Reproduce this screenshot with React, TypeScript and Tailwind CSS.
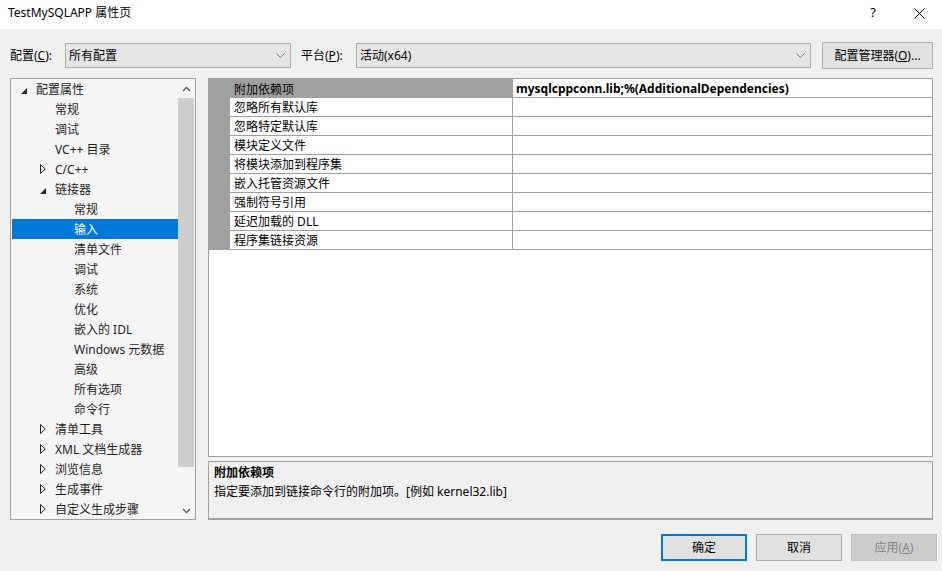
import React from 'react';

type TreeItem = {
  label: string;
  level: number;
  arrow?: 'open' | 'closed';
  selected?: boolean;
};

const treeItems: TreeItem[] = [
  { label: '配置属性', level: 0, arrow: 'open' },
  { label: '常规', level: 1 },
  { label: '调试', level: 1 },
  { label: 'VC++ 目录', level: 1 },
  { label: 'C/C++', level: 1, arrow: 'closed' },
  { label: '链接器', level: 1, arrow: 'open' },
  { label: '常规', level: 2 },
  { label: '输入', level: 2, selected: true },
  { label: '清单文件', level: 2 },
  { label: '调试', level: 2 },
  { label: '系统', level: 2 },
  { label: '优化', level: 2 },
  { label: '嵌入的 IDL', level: 2 },
  { label: 'Windows 元数据', level: 2 },
  { label: '高级', level: 2 },
  { label: '所有选项', level: 2 },
  { label: '命令行', level: 2 },
  { label: '清单工具', level: 1, arrow: 'closed' },
  { label: 'XML 文档生成器', level: 1, arrow: 'closed' },
  { label: '浏览信息', level: 1, arrow: 'closed' },
  { label: '生成事件', level: 1, arrow: 'closed' },
  { label: '自定义生成步骤', level: 1, arrow: 'closed' },
];

const properties = [
  '附加依赖项',
  '忽略所有默认库',
  '忽略特定默认库',
  '模块定义文件',
  '将模块添加到程序集',
  '嵌入托管资源文件',
  '强制符号引用',
  '延迟加载的 DLL',
  '程序集链接资源',
];

const indent = ['pl-0', 'pl-[19px]', 'pl-[38px]'];

const Chevron = () => (
  <svg width="9" height="5" viewBox="0 0 9 5" className="shrink-0">
    <path d="M0.5 0.5 L4.5 4.5 L8.5 0.5" fill="none" stroke="#707070" strokeWidth="1" />
  </svg>
);

const TreeArrow = ({ kind }: { kind?: 'open' | 'closed' }) => {
  if (kind === 'open') {
    return (
      <svg width="6" height="6" viewBox="0 0 6 6" className="mt-[3px]">
        <polygon points="6,0 6,6 0,6" fill="#262626" />
      </svg>
    );
  }
  if (kind === 'closed') {
    return (
      <svg width="6" height="10" viewBox="0 0 6 10">
        <polygon points="0.5,0.5 5.3,5 0.5,9.5" fill="none" stroke="#262626" strokeWidth="1" />
      </svg>
    );
  }
  return null;
};

const Combo = ({ value, className }: { value: string; className: string }) => (
  <div className={`h-[25px] flex items-center justify-between pl-[3px] pr-[5px] bg-[#e5e5e5] border border-[#adadad] ${className}`}>
    <span>{value}</span>
    <Chevron />
  </div>
);

export default function App() {
  return (
    <div className="w-[942px] h-[571px] bg-[#f0f0f0] text-[12px] text-black flex flex-col font-['Noto_Sans','Noto_Sans_CJK_SC',sans-serif] overflow-hidden">
      {/* Title bar */}
      <div className="h-[29px] bg-white flex items-center justify-between pl-[8px] shrink-0">
        <span className="-mt-[3px]">TestMySQLAPP 属性页</span>
        <div className="flex items-center -mt-[3px]">
          <span className="w-[46px] text-center text-[13px]">?</span>
          <span className="w-[46px] flex justify-center">
            <svg width="11" height="11" viewBox="0 0 11 11">
              <path d="M0.5 0.5 L10.5 10.5 M10.5 0.5 L0.5 10.5" stroke="#000" strokeWidth="1" />
            </svg>
          </span>
        </div>
      </div>

      {/* Configuration row */}
      <div className="flex items-center mt-[14px] pl-[10px] h-[25px] shrink-0">
        <span className="w-[55px]">
          配置(<span className="underline">C</span>):
        </span>
        <Combo value="所有配置" className="w-[226px]" />
        <span className="ml-[10px] w-[55px]">
          平台(<span className="underline">P</span>):
        </span>
        <Combo value="活动(x64)" className="w-[455px]" />
        <button className="ml-[11px] w-[111px] h-[27px] bg-[#e1e1e1] border border-[#adadad]">
          配置管理器(<span className="underline">O</span>)...
        </button>
      </div>

      {/* Main area */}
      <div className="flex mt-[10px] pl-[10px] gap-[12px] h-[442px] shrink-0">
        {/* Tree */}
        <div className="w-[186px] border border-[#a0a0a0] bg-[#f5f5f5] flex">
          <div className="flex-1 pl-[1px] text-[#1e1e1e]">
            {treeItems.map((item, i) => (
              <div
                key={i}
                className={`h-[20px] flex items-center ${indent[item.level]} ${
                  item.selected ? 'bg-[#0078d7] text-white' : ''
                }`}
              >
                <span className="w-[24px] flex justify-center shrink-0">
                  <TreeArrow kind={item.arrow} />
                </span>
                <span className="whitespace-nowrap pt-[1px]">{item.label}</span>
              </div>
            ))}
          </div>
          {/* Scrollbar */}
          <div className="w-[17px] flex flex-col pr-[1px]">
            <div className="h-[19px] flex items-center justify-center">
              <svg width="9" height="6" viewBox="0 0 9 6">
                <path d="M1 5 L4.5 1.5 L8 5" fill="none" stroke="#606060" strokeWidth="1.5" />
              </svg>
            </div>
            <div className="h-[369px] bg-[#cdcdcd]" />
            <div className="flex-1 flex items-end justify-center pb-[5px]">
              <svg width="9" height="6" viewBox="0 0 9 6">
                <path d="M1 1 L4.5 4.5 L8 1" fill="none" stroke="#606060" strokeWidth="1.5" />
              </svg>
            </div>
          </div>
        </div>

        {/* Right side */}
        <div className="w-[725px] flex flex-col">
          <div className="h-[379px] bg-white border border-[#a0a0a0] flex flex-col">
            {properties.map((name, i) => (
              <div key={name} className="h-[19px] flex">
                <div className="w-[21px] bg-[#a0a0a0] shrink-0" />
                <div
                  className={`w-[283px] shrink-0 pl-[4px] pt-[2px] flex items-center border-r border-[#a0a0a0] ${
                    i === 0 ? 'bg-[#a0a0a0]' : 'border-b'
                  }`}
                >
                  {name}
                </div>
                <div className="flex-1 pl-[3px] pt-[2px] flex items-center border-b border-[#a0a0a0] font-bold">
                  {i === 0 ? 'mysqlcppconn.lib;%(AdditionalDependencies)' : ''}
                </div>
              </div>
            ))}
          </div>
          <div className="mt-[4px] h-[59px] border border-[#a0a0a0] border-b-2 pl-[5px] pt-[1px] flex flex-col">
            <span className="font-bold h-[19px] leading-[19px]">附加依赖项</span>
            <span className="h-[19px] leading-[19px]">指定要添加到链接命令行的附加项。[例如 kernel32.lib]</span>
          </div>
        </div>
      </div>

      {/* Buttons */}
      <div className="flex justify-end gap-[9px] pr-[5px] mt-[14px]">
        <button className="w-[86px] h-[27px] bg-[#e1e1e1] border-2 border-[#0078d7]">确定</button>
        <button className="w-[86px] h-[27px] bg-[#e1e1e1] border border-[#adadad]">取消</button>
        <button className="w-[86px] h-[27px] bg-[#cccccc] border border-[#bfbfbf] text-[#838383]">
          应用(<span className="underline">A</span>)
        </button>
      </div>
    </div>
  );
}
